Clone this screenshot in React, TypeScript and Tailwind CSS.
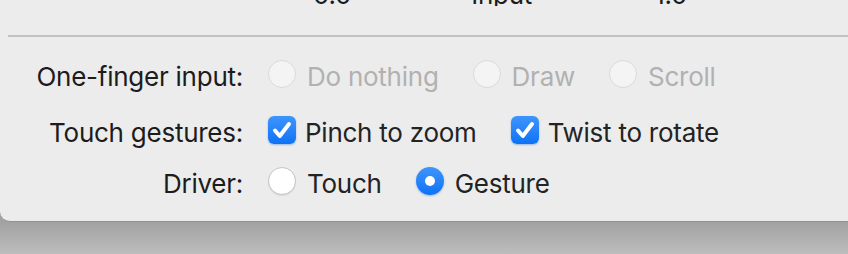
import React from "react";

const font = { fontFamily: "Inter, 'Noto Sans', 'Liberation Sans', sans-serif" };

function Radio({ state }: { state: "disabled" | "off" | "on" }) {
  if (state === "on") {
    return (
      <span className="flex h-[28px] w-[28px] shrink-0 items-center justify-center rounded-full bg-gradient-to-b from-[#3d95fc] to-[#0b72f5] shadow-[0_1px_2px_rgba(0,80,200,0.35)]">
        <span className="h-[10px] w-[10px] rounded-full bg-white" />
      </span>
    );
  }
  if (state === "off") {
    return (
      <span className="h-[28px] w-[28px] shrink-0 rounded-full border border-[#c4c4c4] bg-white shadow-[0_1px_1px_rgba(0,0,0,0.08)]" />
    );
  }
  return <span className="h-[28px] w-[28px] shrink-0 rounded-full border border-[#dadada] bg-[#f4f4f4]" />;
}

function Check() {
  return (
    <span className="flex h-[28px] w-[28px] shrink-0 items-center justify-center rounded-[6px] bg-gradient-to-b from-[#3d95fc] to-[#0b72f5] shadow-[0_1px_2px_rgba(0,80,200,0.35)]">
      <svg width="28" height="28" viewBox="0 0 28 28">
        <path d="M7 14.5 L11.8 20 L21 8" fill="none" stroke="white" strokeWidth="4" strokeLinecap="round" strokeLinejoin="round" />
      </svg>
    </span>
  );
}

function Item({ control, text, disabled, gap = "gap-[11px]" }: { control: React.ReactNode; text: string; disabled?: boolean; gap?: string }) {
  return (
    <div className={`flex items-center ${gap}`}>
      {control}
      <span className={`pt-[5px] leading-[28px] ${disabled ? "text-[#b1b1b1]" : "text-[#232323]"}`}>{text}</span>
    </div>
  );
}

function Label({ text }: { text: string }) {
  return <span className="pt-[5px] text-right leading-[28px] text-[#1c1c1c]">{text}</span>;
}

export default function App() {
  return (
    <div className="flex h-[254px] w-[848px] flex-col bg-[#a2a2a2] text-[26px] tracking-[-0.25px]" style={font}>
      <div className="flex h-[222px] shrink-0 flex-col rounded-bl-[10px] border-b border-[#909090] bg-[#ececec]">
        <div className="h-[6px] overflow-hidden">
          <div className="-mt-[20px] flex leading-[30px] text-[#1c1c1c]">
            <span className="ml-[313px]">0.0</span>
            <span className="ml-[120px]">Input</span>
            <span className="ml-[122px]">1.0</span>
          </div>
        </div>
        <div className="ml-[8px] mt-[29px] h-[2px] bg-[#c2c2c2]" />
        <div className="mt-[23px] grid grid-cols-[243px_1fr] gap-x-[25px]">
          <div className="flex h-[28px] items-center justify-end">
            <Label text="One-finger input:" />
          </div>
          <div className="flex h-[28px] items-center gap-[34px]">
            <Item control={<Radio state="disabled" />} text="Do nothing" disabled />
            <Item control={<Radio state="disabled" />} text="Draw" disabled />
            <Item control={<Radio state="disabled" />} text="Scroll" disabled />
          </div>

          <div className="mt-[28px] flex h-[28px] items-center justify-end">
            <Label text="Touch gestures:" />
          </div>
          <div className="mt-[28px] flex h-[28px] items-center gap-[34px]">
            <Item control={<Check />} text="Pinch to zoom" gap="gap-[9px]" />
            <Item control={<Check />} text="Twist to rotate" gap="gap-[9px]" />
          </div>

          <div className="mt-[23px] flex h-[28px] items-center justify-end">
            <Label text="Driver:" />
          </div>
          <div className="mt-[23px] flex h-[28px] items-center gap-[34px]">
            <Item control={<Radio state="off" />} text="Touch" />
            <Item control={<Radio state="on" />} text="Gesture" />
          </div>
        </div>
      </div>
      <div className="flex-1 bg-gradient-to-b from-[#a2a2a2] to-[#bdbdbd]" />
    </div>
  );
}
